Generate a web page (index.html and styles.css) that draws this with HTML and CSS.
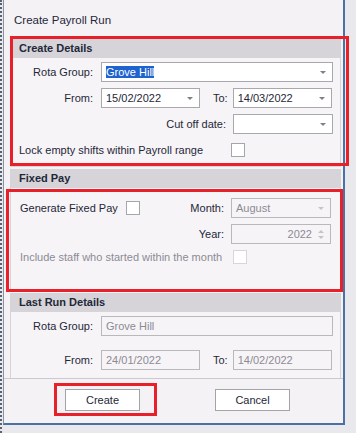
FILE: index.html
```html
<!DOCTYPE html>
<html lang="en">
<head>
    <meta charset="UTF-8">
    <title>Create Payroll Run</title>
    <link rel="stylesheet" href="styles.css">
</head>
<body>
    <div class="window">
        <div class="title">Create Payroll Run</div>

        <!-- Create Details -->
        <section class="group first">
            <div class="group-head">Create Details</div>
            <div class="group-body marked-one">
                <div class="row">
                    <span class="lbl">Rota Group:</span>
                    <div class="field wide"><span class="val"><span class="sel">Grove Hill</span></span><i class="arrow"></i></div>
                </div>
                <div class="row">
                    <span class="lbl">From:</span>
                    <div class="field date"><span class="val">15/02/2022</span><i class="arrow"></i></div>
                    <span class="lbl-to">To:</span>
                    <div class="field date"><span class="val">14/03/2022</span><i class="arrow"></i></div>
                </div>
                <div class="row end">
                    <span class="lbl-side">Cut off date:</span>
                    <div class="field cutoff"><span class="val"></span><i class="arrow"></i></div>
                </div>
                <div class="row">
                    <span class="text lock">Lock empty shifts within Payroll range</span>
                    <span class="check"></span>
                </div>
            </div>
        </section>

        <!-- Fixed Pay -->
        <section class="group">
            <div class="group-head">Fixed Pay</div>
            <div class="group-body fixed marked-two">
                <div class="row">
                    <span class="text">Generate Fixed Pay</span>
                    <span class="check gen"></span>
                    <span class="lbl-side month">Month:</span>
                    <div class="field side off"><span class="val">August</span><i class="arrow"></i></div>
                </div>
                <div class="row end">
                    <span class="lbl-side">Year:</span>
                    <div class="field side off year"><span class="val">2022</span><i class="spin"><b class="up"></b><b class="down"></b></i></div>
                </div>
                <div class="row short">
                    <span class="text muted">Include staff who started within the month</span>
                    <span class="check off inc"></span>
                </div>
            </div>
        </section>

        <!-- Last Run Details -->
        <section class="group">
            <div class="group-head">Last Run Details</div>
            <div class="group-body last">
                <div class="row">
                    <span class="lbl">Rota Group:</span>
                    <div class="field wide off"><span class="val">Grove Hill</span></div>
                </div>
                <div class="row gap">
                    <span class="lbl">From:</span>
                    <div class="field date off"><span class="val">24/01/2022</span></div>
                    <span class="lbl-to">To:</span>
                    <div class="field date off"><span class="val">14/02/2022</span></div>
                </div>
            </div>
        </section>

        <div class="footer">
            <div class="btn-wrap">
                <button class="btn">Create</button>
            </div>
            <button class="btn cancel">Cancel</button>
        </div>
    </div>
</body>
</html>
```

FILE: styles.css
```css
/* Page */
body {
    margin: 0;
    background-color: #e9e9ed;
    font-family: "Liberation Sans", Arial, sans-serif;
    font-size: 11px;
    color: #1e2838;
    height: 433px;
    overflow: hidden;
    border-left: 2px dotted #5a6270;
    box-sizing: border-box;
}

/* Dialog window */
.window {
    width: 342px;
    height: 425px;
    margin-left: 1px;
    box-sizing: border-box;
    background-color: #f5f2f6;
    border-left: 1px solid #8a93a3;
    border-right: 2px solid #4b70a6;
    border-bottom: 2px solid #4b70a6;
    display: flex;
    flex-direction: column;
}

.title {
    height: 38px;
    line-height: 41px;
    padding-left: 10px;
    font-size: 11.5px;
}

/* Groups */
.group {
    margin: 2px 2px 0 6px;
}

.group.first {
    margin-top: 1px;
}

.group-head {
    height: 19px;
    line-height: 19px;
    background-color: #d6d4d8;
    font-weight: bold;
    padding-left: 9px;
}

.group-body {
    background-color: #f7f4f7;
    border: 1px solid #d6d4d8;
    border-top: none;
    padding: 4px 0 0;
    position: relative;
}

.group-body.fixed {
    padding: 10px 0 26px;
}

.group-body.last {
    padding: 4px 0 8px;
    border-bottom: none;
}

.group-body.last .row:last-child {
    margin-bottom: 0;
}

/* Red annotation boxes */
.marked-one::after,
.marked-two::after,
.btn-wrap::after {
    content: "";
    position: absolute;
    border: 3px solid #e8202a;
    pointer-events: none;
}

.marked-one::after {
    top: -22px;
    left: -1px;
    right: -9px;
    bottom: 0;
}

.marked-two::after {
    top: 1px;
    left: -5px;
    right: -3px;
    bottom: -2px;
}

/* Rows */
.row {
    display: flex;
    align-items: center;
    height: 20px;
    margin-bottom: 6px;
}

.row.end {
    justify-content: flex-end;
    padding-right: 7px;
}

.row.short {
    height: 14px;
    margin-bottom: 0;
}

.row.gap {
    margin-top: 14px;
}

.lbl {
    width: 82px;
    text-align: right;
    margin-right: 8px;
}

.lbl-to {
    margin: 0 5px 0 13px;
}

.lbl-side {
    margin-right: 7px;
}

.lbl-side.month {
    margin-left: auto;
}

.text {
    padding-left: 8px;
}

.text.lock {
    width: 212px;
}

.fixed .text {
    padding-left: 9px;
}

.muted {
    color: #8b8b94;
    width: 213px;
}

/* Inputs */
.field {
    height: 20px;
    box-sizing: border-box;
    background-color: #ffffff;
    border: 1px solid #a9a9ad;
    display: flex;
    align-items: center;
    padding: 0 6px 0 4px;
}

.field .val {
    flex: 1;
    white-space: nowrap;
}

.field.wide {
    width: 232px;
}

.field.date {
    width: 99px;
}

.field.cutoff {
    width: 100px;
}

.field.side {
    width: 100px;
}

.row.end .field.side {
    margin-right: 2px;
}

.fixed .row:first-child {
    padding-right: 9px;
}

.field.off {
    background-color: #f7f4f7;
    border-color: #b9b8bc;
    color: #8b8b94;
}

.field.year .val {
    text-align: right;
    padding-right: 6px;
}

.sel {
    background-color: #1f63cf;
    color: #ffffff;
}

.arrow {
    width: 0;
    height: 0;
    border-left: 3px solid transparent;
    border-right: 3px solid transparent;
    border-top: 3px solid #808084;
}

.off .arrow {
    border-top-color: #c4c4c8;
}

.spin {
    display: flex;
    flex-direction: column;
    gap: 3px;
}

.spin b {
    width: 0;
    height: 0;
    border-left: 3px solid transparent;
    border-right: 3px solid transparent;
}

.spin .up {
    border-bottom: 3px solid #c4c4c8;
}

.spin .down {
    border-top: 3px solid #c4c4c8;
}

/* Checkboxes */
.check {
    width: 14px;
    height: 14px;
    box-sizing: border-box;
    background-color: #ffffff;
    border: 1px solid #a6a6aa;
}

.check.gen {
    margin-left: 8px;
}

.check.off {
    border-color: #d8d6da;
}

/* Footer */
.footer {
    border-top: 1px solid #cbc9cd;
    padding-top: 10px;
    display: flex;
}

.btn-wrap {
    position: relative;
    margin-left: 61px;
}

.btn-wrap::after {
    top: -6px;
    left: -11px;
    right: -17px;
    bottom: -5px;
}

.btn {
    width: 75px;
    height: 22px;
    background-color: #ffffff;
    border: 1px solid #a4a4a8;
    font-family: "Liberation Sans", Arial, sans-serif;
    font-size: 11px;
    color: #1e2838;
    padding: 0;
    display: block;
}

.btn.cancel {
    margin-left: 75px;
}
```
